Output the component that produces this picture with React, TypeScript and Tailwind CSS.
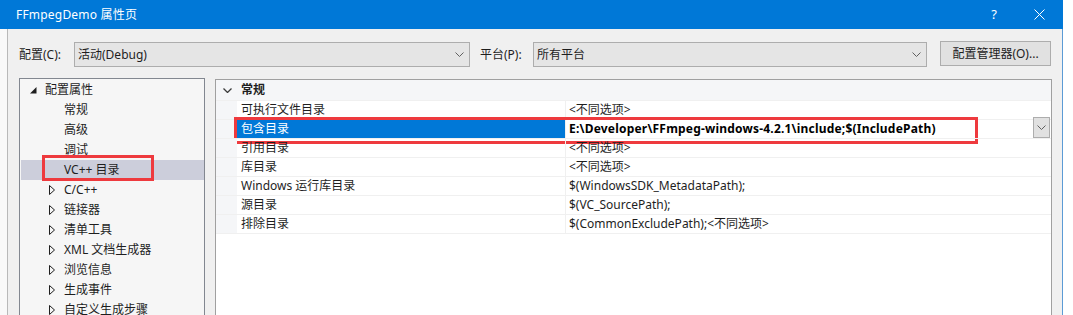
import React from "react";

const Chevron = ({ className = "" }: { className?: string }) => (
  <svg width="9" height="5" viewBox="0 0 9 5" className={className}>
    <path d="M0.5 0.5 L4.5 4.5 L8.5 0.5" fill="none" stroke="#606060" strokeWidth="1" />
  </svg>
);

const Expanded = () => (
  <svg width="7" height="7" viewBox="0 0 7 7">
    <polygon points="0,6.5 6.5,6.5 6.5,0" fill="#1e1e1e" />
  </svg>
);

const Collapsed = () => (
  <svg width="6" height="10" viewBox="0 0 6 10">
    <polygon points="0.5,0.5 5.5,5 0.5,9.5" fill="none" stroke="#1e1e1e" strokeWidth="1" />
  </svg>
);

type TreeItem = { label: string; level: number; state: "exp" | "col" | "leaf"; selected?: boolean };

const tree: TreeItem[] = [
  { label: "配置属性", level: 0, state: "exp" },
  { label: "常规", level: 1, state: "leaf" },
  { label: "高级", level: 1, state: "leaf" },
  { label: "调试", level: 1, state: "leaf" },
  { label: "VC++ 目录", level: 1, state: "leaf", selected: true },
  { label: "C/C++", level: 1, state: "col" },
  { label: "链接器", level: 1, state: "col" },
  { label: "清单工具", level: 1, state: "col" },
  { label: "XML 文档生成器", level: 1, state: "col" },
  { label: "浏览信息", level: 1, state: "col" },
  { label: "生成事件", level: 1, state: "col" },
  { label: "自定义生成步骤", level: 1, state: "col" },
];

const rows: { name: string; value: string; selected?: boolean }[] = [
  { name: "可执行文件目录", value: "<不同选项>" },
  { name: "包含目录", value: "E:\\Developer\\FFmpeg-windows-4.2.1\\include;$(IncludePath)", selected: true },
  { name: "引用目录", value: "<不同选项>" },
  { name: "库目录", value: "<不同选项>" },
  { name: "Windows 运行库目录", value: "$(WindowsSDK_MetadataPath);" },
  { name: "源目录", value: "$(VC_SourcePath);" },
  { name: "排除目录", value: "$(CommonExcludePath);<不同选项>" },
];

export default function App() {
  return (
    <div className="w-[1073px] h-[315px] overflow-hidden bg-white flex text-[12px] leading-none text-[#1e1e1e] font-['Noto_Sans','Noto_Sans_CJK_SC',sans-serif]">
      <div className="w-[1063px] flex flex-col shrink-0">
        {/* title bar */}
        <div className="h-[29px] bg-[#0078d7] flex items-center text-white shrink-0">
          <span className="ml-[16px] text-[12px] tracking-[0.2px]">FFmpegDemo 属性页</span>
          <div className="flex-1" />
          <span className="text-[13px] mr-[37px]">?</span>
          <svg width="11" height="11" viewBox="0 0 11 11" className="mr-[18px]">
            <path d="M0.5 0.5 L10.5 10.5 M10.5 0.5 L0.5 10.5" stroke="#ffffff" strokeWidth="1" />
          </svg>
        </div>
        {/* body */}
        <div className="flex flex-1 min-h-0">
          <div className="w-[8px] bg-[#f9f9f9] border-r border-[#b9b9b9] shrink-0" />
          <div className="flex-1 bg-[#f0f0f0] border-r border-[#5b9bd5] pl-[11px] pt-[13px] flex flex-col">
            {/* top row */}
            <div className="flex items-center h-[25px]">
              <span className="w-[55px]">配置(C):</span>
              <div className="w-[396px] h-[25px] bg-[#e5e5e5] border border-[#adadad] flex items-center pl-[3px] pr-[5px]">
                <span className="flex-1">活动(Debug)</span>
                <Chevron />
              </div>
              <span className="ml-[10px] w-[53px]">平台(P):</span>
              <div className="w-[394px] h-[25px] bg-[#e5e5e5] border border-[#adadad] flex items-center pl-[3px] pr-[5px]">
                <span className="flex-1">所有平台</span>
                <Chevron />
              </div>
              <div className="ml-[13px] w-[111px] h-[25px] -mt-[2px] bg-[#e1e1e1] border border-[#adadad] flex items-center justify-center">
                配置管理器(O)...
              </div>
            </div>
            {/* panels */}
            <div className="flex items-start mt-[11px]">
              {/* tree */}
              <div className="w-[186px] h-[260px] bg-[#f6f6f6] border border-[#828790] pt-px shrink-0">
                {tree.map((t, i) => (
                  <div
                    key={i}
                    className={`relative h-[20px] flex items-center ml-px ${t.selected ? "bg-[#cccedb]" : ""} ${t.level === 0 ? "pl-[9px]" : "pl-[28px]"}`}
                  >
                    <div className="w-[15px] flex items-center">
                      {t.state === "exp" && <Expanded />}
                      {t.state === "col" && <Collapsed />}
                    </div>
                    <span>{t.label}</span>
                    {t.selected && (
                      <div className="absolute left-[21px] top-[-5px] w-[112px] h-[26px] border-[3px] border-[#ee3a3e]" />
                    )}
                  </div>
                ))}
              </div>
              {/* property grid */}
              <div className="ml-[10px] mt-px w-[837px] h-[260px] bg-white border border-[#a0a0a0]">
                <div className="h-[20px] bg-[#f5f6f8] flex items-center">
                  <div className="w-[21px] flex justify-center pl-[2px]">
                    <svg width="9" height="5" viewBox="0 0 9 5">
                      <path d="M0.5 0.5 L4.5 4.5 L8.5 0.5" fill="none" stroke="#3c3c3c" strokeWidth="1.3" />
                    </svg>
                  </div>
                  <span className="ml-[4px] font-bold">常规</span>
                </div>
                {rows.map((r, i) => (
                  <div key={i} className="relative h-[19px] flex border-t border-[#f0f0f0]">
                    <div className="w-[21px] bg-[#f5f6f8]" />
                    <div
                      className={`w-[328px] flex items-center pl-[4px] ${r.selected ? "bg-[#0078d7] text-white" : ""}`}
                    >
                      {r.name}
                    </div>
                    <div className={`flex-1 flex items-center pl-[3px] border-l border-[#f0f0f0] ${r.selected ? "font-bold text-black tracking-[0.2px]" : ""}`}>
                      {r.value}
                    </div>
                    {r.selected && (
                      <>
                        <div className="absolute right-[1px] top-[-3px] w-[17px] h-[21px] bg-[#e1e1e1] border border-[#adadad] flex items-center justify-center">
                          <Chevron />
                        </div>
                        <div className="absolute left-[18px] top-[-3px] w-[744px] h-[27px] border-[3px] border-[#ee3a3e]" />
                      </>
                    )}
                  </div>
                ))}
                <div className="border-t border-[#f0f0f0]" />
              </div>
            </div>
          </div>
        </div>
      </div>
    </div>
  );
}
